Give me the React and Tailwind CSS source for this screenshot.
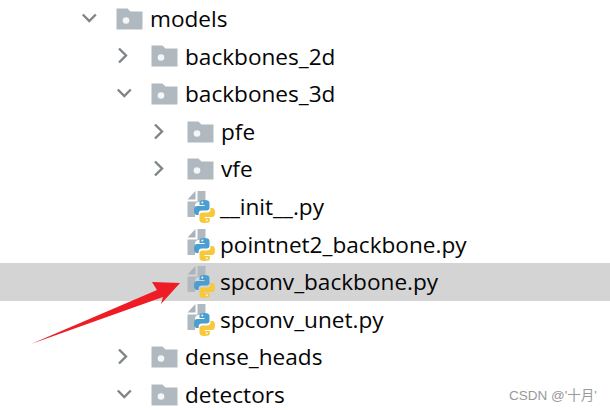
import React from "react";

const Chevron = ({ open }) => (
  <svg width="18" height="18" viewBox="0 0 18 18" fill="none" className="shrink-0">
    {open ? (
      <path d="M2.8 4.5 L9.3 11 L15.8 4.5" stroke="#7f8487" strokeWidth="2.4" />
    ) : (
      <path d="M4 1.5 L11 8.5 L4 15.5" stroke="#7f8487" strokeWidth="2.4" />
    )}
  </svg>
);

const Folder = () => (
  <svg width="27" height="22" viewBox="0 0 27 22" className="shrink-0">
    <path d="M0.5 0.5 H11.5 L14.5 3.5 H26.5 V21.5 H0.5 Z" fill="#b0b9c0" />
    <circle cx="10" cy="12.5" r="3.3" fill="#f4f6f7" />
  </svg>
);

const PyFile = () => (
  <svg width="28" height="32" viewBox="0 0 28 32" className="shrink-0">
    <path d="M8.5 0 V8.5 H0.5 Z" fill="#aab3ba" />
    <path d="M10.5 0 H18.5 V11 H12 C9 11 8 13 8 15 V19 C8 21 8 24 8 26 H0.5 V10.5 H10.5 Z" fill="#b0b9c0" />
    <path d="M12.5 11.5 C12.5 9.8 14 9 17.5 9 C21 9 22.5 10 22.5 12 V17 C22.5 18.5 21.3 19.5 19.8 19.5 H14.8 C12.8 19.5 11.7 20.8 11.7 22.5 V24 H9.8 C8 24 7 22.3 7 19.5 C7 16.6 8 15 10 15 H17.5 V14 H12.5 Z" fill="#4a9fd0" />
    <circle cx="15.3" cy="11.6" r="1" fill="#f4f8fb" />
    <path d="M22.8 30 C22.8 31.3 21 32 17.5 32 C14 32 12.5 31 12.5 29 V24.5 C12.5 22.8 13.7 21.5 15.3 21.5 H20.3 C22.3 21.5 23.4 20.3 23.4 18.5 V17 H25.3 C27 17 28 18.7 28 21.5 C28 24.4 27 26 25 26 H17.5 V27 H22.8 Z" fill="#f7c83c" />
    <circle cx="19.8" cy="29.3" r="1" fill="#fdf6dd" />
  </svg>
);

const rows = [
  { name: "models", indent: 80, type: "open" },
  { name: "backbones_2d", indent: 115, type: "closed" },
  { name: "backbones_3d", indent: 115, type: "open" },
  { name: "pfe", indent: 151, type: "closed" },
  { name: "vfe", indent: 151, type: "closed" },
  { name: "__init__.py", indent: 151, type: "file" },
  { name: "pointnet2_backbone.py", indent: 151, type: "file" },
  { name: "spconv_backbone.py", indent: 151, type: "file", selected: true },
  { name: "spconv_unet.py", indent: 151, type: "file" },
  { name: "dense_heads", indent: 115, type: "closed" },
  { name: "detectors", indent: 115, type: "open" },
];

export default function App() {
  return (
    <div className="relative w-[610px] h-[410px] overflow-hidden bg-white font-['Open_Sans','Noto_Sans',sans-serif] text-[22.6px] text-[#050505]">
      {rows.map((r) => (
        <div
          key={r.name}
          className={`flex items-center h-[37.6px] ${r.selected ? "bg-[#d4d4d4]" : ""}`}
          style={{ paddingLeft: r.indent }}
        >
          <div className="w-[35.5px] flex items-center shrink-0">
            {r.type !== "file" && <Chevron open={r.type === "open"} />}
          </div>
          {r.type === "file" ? (
            <div className="w-[33.5px] shrink-0 pt-[1px]"><PyFile /></div>
          ) : (
            <div className="w-[34.5px] shrink-0"><Folder /></div>
          )}
          <span className="whitespace-nowrap leading-none pt-[1px]">{r.name}</span>
        </div>
      ))}
      <svg className="absolute left-0 top-[270px]" width="200" height="90" viewBox="0 0 200 90">
        <path d="M31 74 L157 20 L152 12 L180 13 L161 34 L163 27 Z" fill="#ee1c25" />
      </svg>
      <div className="absolute left-[509px] top-[386px] text-[13.5px] text-[#999999] whitespace-nowrap font-['Liberation_Sans','Noto_Sans_CJK_SC',sans-serif]">
        CSDN @'十月'
      </div>
    </div>
  );
}
